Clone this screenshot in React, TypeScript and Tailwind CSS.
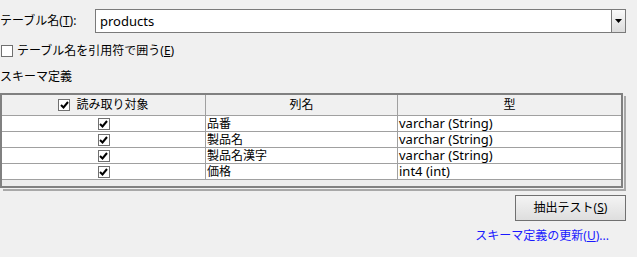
import React from "react";

const rows = [
	{ name: "品番", type: "varchar (String)" },
	{ name: "製品名", type: "varchar (String)" },
	{ name: "製品名漢字", type: "varchar (String)" },
	{ name: "価格", type: "int4 (int)" },
];

function CheckBox({ checked }: { checked?: boolean }) {
	return (
		<span className="inline-flex h-[12px] w-[12px] items-center justify-center border border-[#707070] bg-white">
			{checked && (
				<svg width="9" height="8" viewBox="0 0 9 8">
					<path d="M1 4 L3.5 6.5 L8 1" fill="none" stroke="#000" strokeWidth="2" />
				</svg>
			)}
		</span>
	);
}

export default function App() {
	return (
		<div
			className="relative flex h-[257px] w-[637px] flex-col bg-[#f0f0f0] text-[12px] leading-none text-black"
			style={{ fontFamily: '"Noto Sans", "Noto Sans CJK JP", sans-serif' }}
		>
			{/* Table name */}
			<div className="mt-[9px] flex items-center">
				<span className="w-[95px]">
					テーブル名(<span className="underline">T</span>):
				</span>
				<div className="flex h-[24px] w-[531px] items-stretch border border-[#7a7a7a] bg-white">
					<span className="flex flex-1 items-center pl-[4px] text-[13px]">products</span>
					<div className="flex w-[14px] items-center justify-center border-l border-[#7a7a7a] bg-gradient-to-b from-[#fafafa] to-[#dcdcdc]">
						<svg width="7" height="4" viewBox="0 0 7 4">
							<path d="M0 0 H7 L3.5 4 Z" fill="#000" />
						</svg>
					</div>
				</div>
			</div>

			{/* Quote option */}
			<div className="mt-[12px] flex items-center gap-[4px] pl-[1px]">
				<CheckBox />
				<span>
					テーブル名を引用符で囲う(<span className="underline">E</span>)
				</span>
			</div>

			<div className="mt-[14px]">スキーマ定義</div>

			{/* Schema table */}
			<div className="mt-[10px] w-[623px] border-2 border-[#808080] bg-[#ececec] pb-[6px] shadow-[1px_1px_0_#f0f0f0,3px_3px_0_#a8a8a8]">
				<div className="grid h-[21px] grid-cols-[204px_192px_223px] border-b border-[#a0a0a0] bg-[#f0f0f0]">
					<div className="flex items-center justify-center gap-[6px] border-r border-[#a0a0a0]">
						<CheckBox checked />
						<span>読み取り対象</span>
					</div>
					<div className="flex items-center justify-center border-r border-[#a0a0a0]">列名</div>
					<div className="flex items-center justify-center">型</div>
				</div>
				{rows.map((r) => (
					<div
						key={r.name}
						className="grid h-[16px] grid-cols-[204px_192px_223px] border-b border-[#a0a0a0] bg-white"
					>
						<div className="flex items-center justify-center border-r border-[#a0a0a0]">
							<CheckBox checked />
						</div>
						<div className="flex items-center border-r border-[#a0a0a0] pl-[1px]">{r.name}</div>
						<div className="flex items-center pl-[1px] text-[13px]">{r.type}</div>
					</div>
				))}
			</div>

			{/* Actions */}
			<div className="mt-[7px] flex justify-end pr-[11px]">
				<button className="flex h-[26px] w-[111px] items-center justify-center border border-[#707070] bg-gradient-to-b from-[#f4f4f4] to-[#dedede]">
					抽出テスト(<span className="underline">S</span>)
				</button>
			</div>
			<div className="mt-[9px] flex justify-end pr-[28px]">
				<span className="text-[#1a1aff]">
					スキーマ定義の更新(<span className="underline">U</span>)...
				</span>
			</div>
		</div>
	);
}
